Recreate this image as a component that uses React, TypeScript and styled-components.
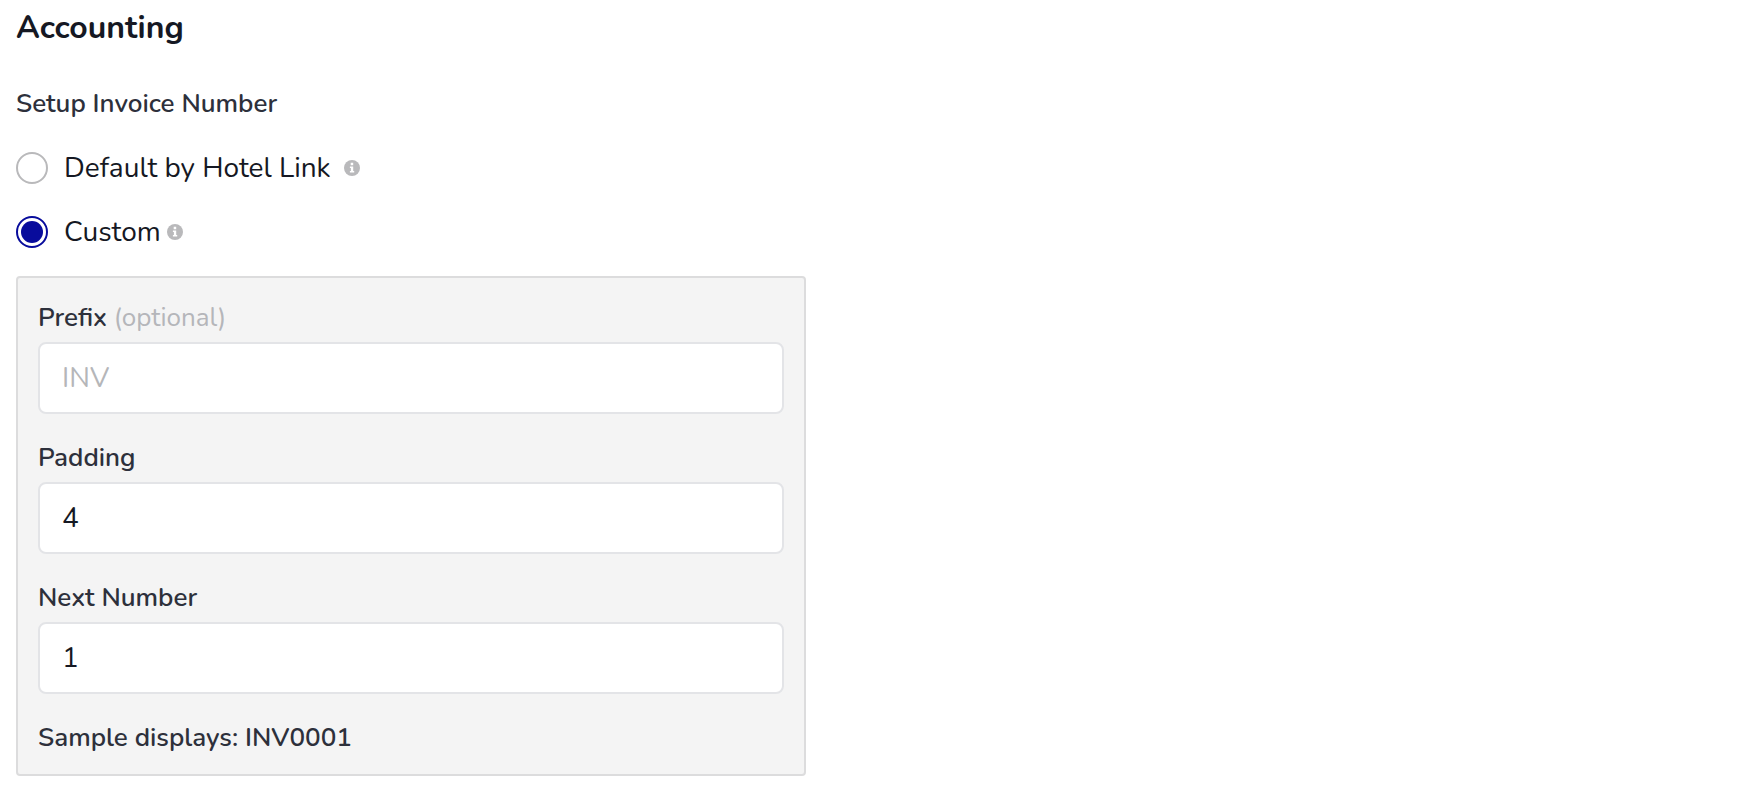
import React, { useId, useState } from "react";
import styled, { createGlobalStyle } from "styled-components";

const GlobalStyle = createGlobalStyle`
  *, *::before, *::after { box-sizing: border-box; }
  body {
    margin: 0;
    background: #fff;
    color: #151823;
    font-family: Nunito, Lato, sans-serif;
  }
`;

const Page = styled.main`
  display: flex;
  flex-direction: column;
  padding: 8px 16px 20px;
`;

const Title = styled.h1`
  margin: 0 0 38px;
  font-size: 32px;
  line-height: 40px;
  font-weight: 700;
`;

const Group = styled.fieldset`
  display: flex;
  flex-direction: column;
  gap: 32px;
  min-width: 0;
  margin: 0 0 28px;
  padding: 0;
  border: 0;
`;

const Legend = styled.legend`
  margin-bottom: 30px;
  padding: 0;
  color: #2d303b;
  font-size: 26px;
  line-height: 36px;
  font-weight: 600;
`;

const Option = styled.div<{ $gap: number }>`
  display: flex;
  align-items: center;
  gap: ${(p) => p.$gap}px;
  height: 32px;
`;

const OptionLabel = styled.label`
  display: flex;
  align-items: center;
  gap: 16px;
  font-size: 28px;
  line-height: 32px;
`;

const Radio = styled.input`
  appearance: none;
  width: 32px;
  height: 32px;
  margin: 0;
  padding: 3px;
  border: 2px solid #b9b9bb;
  border-radius: 50%;
  background: #fff;

  &:checked {
    border-color: #080c9c;
    background: #080c9c content-box;
  }
`;

const Panel = styled.section`
  display: flex;
  flex-direction: column;
  gap: 26px;
  width: 100%;
  max-width: 790px;
  padding: 22px 20px 18px;
  border: 2px solid #dcdcdd;
  border-radius: 4px;
  background: #f4f4f4;
  color: #2d303b;
  font-size: 26px;
  line-height: 36px;
  font-weight: 600;
`;

const FieldBox = styled.div`
  display: flex;
  flex-direction: column;
  gap: 6px;
`;

const Optional = styled.span`
  color: #b5b6ba;
  font-weight: 400;
`;

const TextInput = styled.input`
  width: 100%;
  height: 72px;
  padding: 0 22px;
  border: 2px solid #e3e4e7;
  border-radius: 8px;
  background: #fff;
  color: #151823;
  font-family: inherit;
  font-size: 28px;

  &::placeholder { color: #b5b6b9; opacity: 1; }
`;

const Sample = styled.p`
  margin: 0;
`;

const Icon = styled.svg`
  flex: none;
  width: 16px;
  height: 16px;
`;

function InfoIcon() {
  return (
    <Icon viewBox="0 0 16 16" aria-hidden="true">
      <circle cx="8" cy="8" r="8" fill="#b9b9bb" />
      <path fill="#fff" d="M6.7 2.8h2.5v2.4H6.7zM5.9 6.5h3.3v4.6h1v1.4H5.9v-1.4h1V7.9h-1z" />
    </Icon>
  );
}

type FieldProps = {
  label: string;
  optional?: boolean;
  value: string;
  placeholder?: string;
  onChange: (value: string) => void;
};

function Field({ label, optional, value, placeholder, onChange }: FieldProps) {
  const id = useId();
  return (
    <FieldBox>
      <label htmlFor={id}>
        {label}{" "}
        {optional && <Optional>(optional)</Optional>}
      </label>
      <TextInput
        id={id}
        type="text"
        value={value}
        placeholder={placeholder}
        onChange={(e) => onChange(e.target.value)}
      />
    </FieldBox>
  );
}

export default function App() {
  const [mode, setMode] = useState("custom");
  const [prefix, setPrefix] = useState("");
  const [padding, setPadding] = useState("4");
  const [next, setNext] = useState("1");
  const sample = (prefix || "INV") + next.padStart(Math.min(Number(padding) || 0, 20), "0");

  return (
    <>
      <GlobalStyle />
      <Page>
        <Title>Accounting</Title>
        <Group>
          <Legend>Setup Invoice Number</Legend>
          <Option $gap={13}>
            <OptionLabel>
              <Radio type="radio" name="mode" checked={mode === "default"} onChange={() => setMode("default")} />
              Default by Hotel Link
            </OptionLabel>
            <InfoIcon />
          </Option>
          <Option $gap={6}>
            <OptionLabel>
              <Radio type="radio" name="mode" checked={mode === "custom"} onChange={() => setMode("custom")} />
              Custom
            </OptionLabel>
            <InfoIcon />
          </Option>
        </Group>
        {mode === "custom" && (
          <Panel>
            <Field label="Prefix" optional value={prefix} placeholder="INV" onChange={setPrefix} />
            <Field label="Padding" value={padding} onChange={setPadding} />
            <Field label="Next Number" value={next} onChange={setNext} />
            <Sample>Sample displays: {sample}</Sample>
          </Panel>
        )}
      </Page>
    </>
  );
}
